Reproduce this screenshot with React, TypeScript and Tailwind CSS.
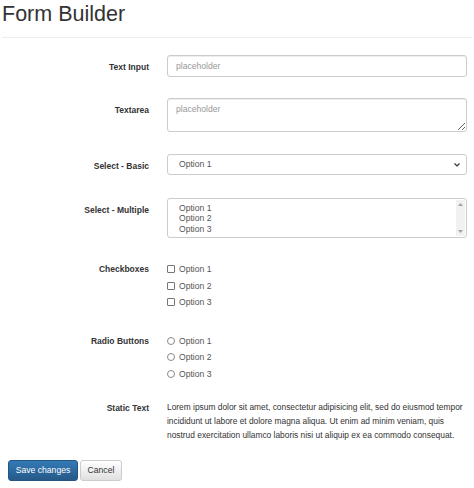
import { ReactNode } from 'react';

const font = { fontFamily: '"Liberation Sans", Arial, Helvetica, sans-serif' };

function Row({ label, children, className = '' }: { label: string; children: ReactNode; className?: string }) {
  return (
    <div className={`flex items-start ${className}`}>
      <label className="w-[150px] shrink-0 pt-[5px] pr-[1px] text-right text-[8.5px] font-bold leading-[14px] text-[#333]">
        {label}
      </label>
      <div className="ml-[17px] w-[300px] text-[8.6px] leading-[14px]">{children}</div>
    </div>
  );
}

function Chevron() {
  return (
    <svg width="8" height="6" viewBox="0 0 8 6" className="absolute right-[5px] top-[7px]">
      <path d="M1.5 1.5 L4 4 L6.5 1.5" fill="none" stroke="#333" strokeWidth="1.2" />
    </svg>
  );
}

export default function App() {
  const options = ['Option 1', 'Option 2', 'Option 3'];

  return (
    <div className="w-[474px] h-[488px] bg-white text-[#333] overflow-hidden" style={font}>
      {/* Header */}
      <div className="mx-[2px] h-[38px] border-b border-[#eee]">
        <h1 className="text-[21.5px] leading-[28px] text-[#333]">Form Builder</h1>
      </div>

      <form className="pt-[17px]">
        <Row label="Text Input">
          <input
            type="text"
            placeholder="placeholder"
            className="block h-[22px] w-full rounded-[3px] border border-[#ccc] px-[8px] text-[8.6px] text-[#555] placeholder-[#999] shadow-[inset_0_1px_1px_rgba(0,0,0,0.075)] outline-none"
          />
        </Row>

        <Row label="Textarea" className="mt-[21px]">
          <textarea
            placeholder="placeholder"
            className="block h-[34px] w-full rounded-[3px] border border-[#ccc] px-[8px] py-[3px] text-[8.6px] leading-[14px] text-[#555] placeholder-[#999] shadow-[inset_0_1px_1px_rgba(0,0,0,0.075)] outline-none"
          />
        </Row>

        <Row label="Select - Basic" className="mt-[22px]">
          <div className="relative h-[21px] w-full rounded-[3px] border border-[#ccc] pl-[11px] leading-[19px] text-[#555]">
            Option 1
            <Chevron />
          </div>
        </Row>

        <Row label="Select - Multiple" className="mt-[23px]">
          <div className="flex h-[40px] w-full rounded-[3px] border border-[#ccc] leading-[10.3px] text-[#555]">
            <div className="flex-1 pl-[11px] pt-[4px]">
              {options.map((o) => (
                <div key={o}>{o}</div>
              ))}
            </div>
            <div className="my-[1px] mr-[1px] flex w-[9px] flex-col items-center justify-between bg-[#f1f1f1] py-[3px]">
              <svg width="5" height="3" viewBox="0 0 5 3">
                <path d="M0 3 L2.5 0 L5 3 Z" fill="#a3a3a3" />
              </svg>
              <svg width="5" height="3" viewBox="0 0 5 3">
                <path d="M0 0 L2.5 3 L5 0 Z" fill="#a3a3a3" />
              </svg>
            </div>
          </div>
        </Row>

        <Row label="Checkboxes" className="mt-[19px]">
          <div>
            {options.map((o, i) => (
              <div key={o} className={`flex h-[16.5px] items-center text-[#555] ${i === 0 ? 'mt-[4px]' : ''}`}>
                <span className="mr-[4px] h-[8px] w-[8px] rounded-[1px] border border-[#767676] bg-white" />
                {o}
              </div>
            ))}
          </div>
        </Row>

        <Row label="Radio Buttons" className="mt-[18px]">
          <div>
            {options.map((o, i) => (
              <div key={o} className={`flex h-[16.5px] items-center text-[#555] ${i === 0 ? 'mt-[4px]' : ''}`}>
                <span className="mr-[4px] h-[8px] w-[8px] rounded-full border border-[#8a8a8a] bg-white" />
                {o}
              </div>
            ))}
          </div>
        </Row>

        <Row label="Static Text" className="mt-[14px]">
          <p className="pt-[4px] text-[8.4px] text-[#333]">
            Lorem ipsum dolor sit amet, consectetur adipisicing elit, sed do eiusmod tempor incididunt ut labore et
            dolore magna aliqua. Ut enim ad minim veniam, quis nostrud exercitation ullamco laboris nisi ut aliquip ex
            ea commodo consequat.
          </p>
        </Row>

        <div className="ml-[8px] mt-[18px] flex gap-[2px]">
          <button
            type="button"
            className="h-[21px] w-[70px] rounded-[3px] border border-[#245580] bg-gradient-to-b from-[#337ab7] to-[#265a88] text-[8.6px] text-white"
          >
            Save changes
          </button>
          <button
            type="button"
            className="h-[21px] w-[42px] rounded-[3px] border border-[#ccc] bg-gradient-to-b from-white to-[#e0e0e0] text-[8.6px] text-[#333]"
          >
            Cancel
          </button>
        </div>
      </form>
    </div>
  );
}
